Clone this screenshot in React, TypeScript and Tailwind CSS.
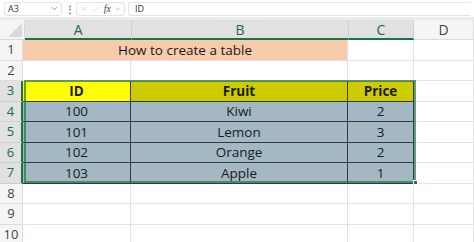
import { ChevronDown, X, Check } from 'lucide-react';

const COLS = [108, 217, 66, 60];
const ROW_H = 'h-[20.5px]';

type Cell = { text?: string; bg?: string; bold?: boolean; table?: boolean; span?: number };

const BLUE = 'bg-[#a3b8c2]';

const rows: Cell[][] = [
  [{ text: 'How to create a table', bg: 'bg-[#f8cbad]', span: 2 }, {}, {}],
  [{}, {}, {}, {}],
  [
    { text: 'ID', bg: 'bg-[#ffff00]', bold: true, table: true },
    { text: 'Fruit', bg: 'bg-[#cccc00]', bold: true, table: true },
    { text: 'Price', bg: 'bg-[#cccc00]', bold: true, table: true },
    {},
  ],
  [
    { text: '100', bg: BLUE, table: true },
    { text: 'Kiwi', bg: BLUE, table: true },
    { text: '2', bg: BLUE, table: true },
    {},
  ],
  [
    { text: '101', bg: BLUE, table: true },
    { text: 'Lemon', bg: BLUE, table: true },
    { text: '3', bg: BLUE, table: true },
    {},
  ],
  [
    { text: '102', bg: BLUE, table: true },
    { text: 'Orange', bg: BLUE, table: true },
    { text: '2', bg: BLUE, table: true },
    {},
  ],
  [
    { text: '103', bg: BLUE, table: true },
    { text: 'Apple', bg: BLUE, table: true },
    { text: '1', bg: BLUE, table: true },
    {},
  ],
  [{}, {}, {}, {}],
  [{}, {}, {}, {}],
  [{}, {}, {}, {}],
];

function Toolbar() {
  return (
    <div className="flex h-[17px] items-center gap-[3px] bg-white px-[4px] text-[9px] text-[#333]">
      <div className="flex h-[14px] w-[58px] items-center justify-between rounded-[3px] border border-[#e3e3e3] pl-[3px] pr-[2px]">
        <span>A3</span>
        <ChevronDown size={9} strokeWidth={1.5} className="text-[#555]" />
      </div>
      <span className="w-[8px] text-center text-[10px] font-bold leading-none text-[#666]">⋮</span>
      <div className="flex h-[14px] w-[49px] items-center gap-[3px] rounded-[3px] border border-[#e3e3e3] px-[3px] text-[#b8b8b8]">
        <X size={10} strokeWidth={1.2} />
        <Check size={10} strokeWidth={1.2} />
        <span className="font-['Liberation_Serif',serif] text-[10px] italic text-[#444]">fx</span>
        <ChevronDown size={8} strokeWidth={1.5} className="text-[#777]" />
      </div>
      <div className="flex h-[14px] flex-1 items-center rounded-l-[3px] border border-r-0 border-[#e3e3e3] pl-[6px]">
        ID
      </div>
    </div>
  );
}

function ColumnHeader() {
  return (
    <div className="flex h-[20px] bg-[#f5f5f5]">
      <div className="flex w-[25px] items-end justify-end border-r border-b border-[#d9d9d9] bg-[#f5f5f5] p-[2px]">
        <svg width="14" height="14" viewBox="0 0 14 14">
          <polygon points="14,0 14,14 0,14" fill="#d8d8d8" />
        </svg>
      </div>
      {['A', 'B', 'C', 'D'].map((c, i) => (
        <div
          key={c}
          style={{ width: COLS[i] }}
          className={
            i < 3
              ? 'flex items-center justify-center border-r border-b-2 border-r-[#cfcfcf] border-b-[#1d7245] bg-[#e1e1e1] text-[14px] text-[#1d6b40]'
              : 'flex items-center justify-center border-r border-b border-[#dcdcdc] text-[14px] text-[#444]'
          }
        >
          {c}
        </div>
      ))}
    </div>
  );
}

export default function App() {
  return (
    <div className="relative h-[242px] w-[474px] overflow-hidden bg-white font-['Open_Sans','Liberation_Sans',sans-serif]">
      <Toolbar />
      <div className="h-[3px] bg-[#ececec]" />
      <ColumnHeader />
      <div className="relative">
        {rows.map((row, r) => {
          const selected = r >= 2 && r <= 6;
          let col = 0;
          return (
            <div key={r} className={`flex ${ROW_H}`}>
              <div
                className={
                  selected
                    ? 'flex w-[25px] items-center justify-center border-r-2 border-b border-r-[#1d7245] border-b-[#cfcfcf] bg-[#e1e1e1] text-[13px] text-[#1d6b40]'
                    : 'flex w-[25px] items-center justify-center border-r border-b border-[#dcdcdc] bg-[#f5f5f5] text-[13px] text-[#444]'
                }
              >
                {r + 1}
              </div>
              {row.map((cell, i) => {
                if (col >= COLS.length) return null;
                const span = cell.span ?? 1;
                let w = 0;
                for (let k = 0; k < span; k++) w += COLS[col + k];
                col += span;
                return (
                  <div
                    key={i}
                    style={{ width: w }}
                    className={[
                      'flex shrink-0 items-center justify-center text-[13.5px] text-[#1a1a1a]',
                      cell.bg ?? 'bg-white',
                      cell.bold ? 'font-bold' : '',
                      cell.table
                        ? 'border-r border-b border-[#2d3b42]'
                        : 'border-r border-b border-[#e2e2e2]',
                    ].join(' ')}
                  >
                    {cell.text}
                  </div>
                );
              })}
            </div>
          );
        })}
        {/* selection outline A3:C7 */}
        <div className="pointer-events-none absolute left-[24px] top-[40px] h-[103px] w-[392px] border-2 border-[#217346] opacity-70" />
        <div className="absolute left-[413px] top-[140px] h-[5px] w-[5px] border border-white bg-[#217346]" />
      </div>
    </div>
  );
}
